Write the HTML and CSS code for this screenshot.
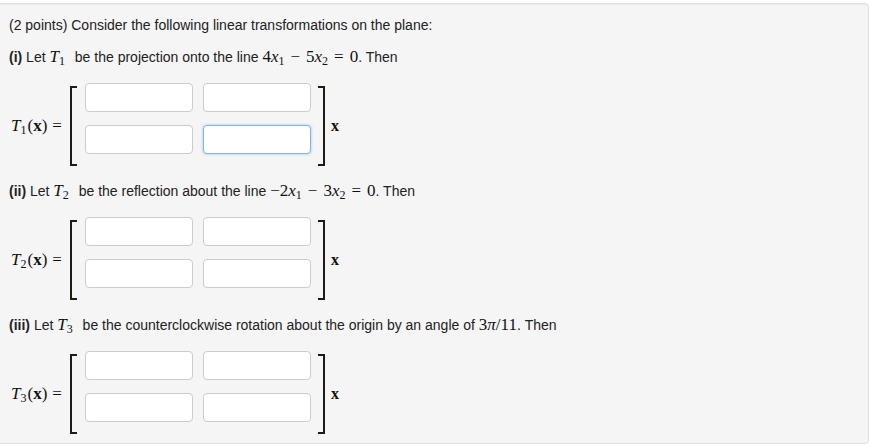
FILE: index.html
```html
<!DOCTYPE html>
<html lang="en">
<head>
<meta charset="utf-8">
<title>Linear transformations</title>
<link rel="stylesheet" href="styles.css">
</head>
<body>
<div class="well">
  <p class="line intro">(2 points) Consider the following linear transformations on the plane:</p>

  <section class="part">
    <p class="line stmt"><b>(i)</b> Let <span class="m t"><i>T</i><sub>1</sub></span> be the projection onto the line <span class="m">4<i>x</i><sub>1</sub><span class="op">−</span>5<i>x</i><sub>2</sub><span class="rel">=</span>0</span>. Then</p>
    <div class="eq">
      <span class="lhs"><i>T</i><sub>1</sub>(<b>x</b>)<span class="eqs">=</span></span>
      <div class="matrix">
        <span class="br l"></span>
        <div class="grid">
          <input class="ans" type="text">
          <input class="ans" type="text">
          <input class="ans" type="text">
          <input class="ans focus" type="text">
        </div>
        <span class="br r"></span>
      </div>
      <b class="x">x</b>
    </div>
  </section>

  <section class="part">
    <p class="line stmt"><b>(ii)</b> Let <span class="m t"><i>T</i><sub>2</sub></span> be the reflection about the line <span class="m">−2<i>x</i><sub>1</sub><span class="op">−</span>3<i>x</i><sub>2</sub><span class="rel">=</span>0</span>. Then</p>
    <div class="eq">
      <span class="lhs"><i>T</i><sub>2</sub>(<b>x</b>)<span class="eqs">=</span></span>
      <div class="matrix">
        <span class="br l"></span>
        <div class="grid">
          <input class="ans" type="text">
          <input class="ans" type="text">
          <input class="ans" type="text">
          <input class="ans" type="text">
        </div>
        <span class="br r"></span>
      </div>
      <b class="x">x</b>
    </div>
  </section>

  <section class="part">
    <p class="line stmt"><b>(iii)</b> Let <span class="m t"><i>T</i><sub>3</sub></span> be the counterclockwise rotation about the origin by an angle of <span class="m">3<i>π</i>/11</span>. Then</p>
    <div class="eq">
      <span class="lhs"><i>T</i><sub>3</sub>(<b>x</b>)<span class="eqs">=</span></span>
      <div class="matrix">
        <span class="br l"></span>
        <div class="grid">
          <input class="ans" type="text">
          <input class="ans" type="text">
          <input class="ans" type="text">
          <input class="ans" type="text">
        </div>
        <span class="br r"></span>
      </div>
      <b class="x">x</b>
    </div>
  </section>
</div>
</body>
</html>
```

FILE: styles.css
```css
html, body {
  margin: 0;
  background: #ffffff;
}

body {
  font-family: "Liberation Sans", Arial, sans-serif;
  font-size: 14px;
  color: #222222;
}

.well {
  margin: 3px 1px 0 -3px;
  padding: 11px 10px 9px 11px;
  background: #f5f5f5;
  border: 1px solid #e0e0e0;
  border-radius: 4px;
  box-shadow: inset 0 1px 1px rgba(0, 0, 0, 0.05);
}

.line {
  margin: 0;
  line-height: 20px;
  white-space: nowrap;
}

.intro {
  margin-bottom: 12px;
}

.part {
  margin-bottom: 15px;
}

.part:last-child {
  margin-bottom: 0;
}

.stmt {
  margin-bottom: 19px;
}

.m {
  font-family: "Liberation Serif", "Times New Roman", serif;
  font-size: 17px;
  color: #111111;
}

.m.t {
  margin-right: 6px;
}

.m sub,
.lhs sub {
  font-size: 12px;
  line-height: 0;
  vertical-align: -3px;
}

.op {
  margin: 0 6px;
}

.rel {
  margin: 0 6px;
}

.eq {
  display: flex;
  align-items: center;
  height: 80px;
}

.lhs {
  box-sizing: border-box;
  width: 61px;
  padding-left: 2px;
  font-family: "Liberation Serif", "Times New Roman", serif;
  font-size: 17px;
  color: #111111;
  white-space: nowrap;
}

.lhs sub {
  margin-right: 1px;
}

.lhs b {
  font-weight: bold;
}

.eqs {
  margin-left: 5px;
}

.matrix {
  display: flex;
  height: 80px;
}

.br {
  box-sizing: border-box;
  width: 7px;
  height: 80px;
  border-top: 2px solid #1e1a14;
  border-bottom: 2px solid #1e1a14;
}

.br.l {
  border-left: 2px solid #1e1a14;
}

.br.r {
  border-right: 2px solid #1e1a14;
}

.grid {
  display: grid;
  grid-template-columns: 108px 108px;
  grid-template-rows: 29px 29px;
  column-gap: 10px;
  row-gap: 13px;
  align-self: flex-start;
  margin: -3px 7px 0 8px;
}

.ans {
  box-sizing: border-box;
  width: 108px;
  height: 29px;
  margin: 0;
  padding: 0 6px;
  background: #ffffff;
  border: 1px solid #cccccc;
  border-radius: 4px;
  font: 13px "Liberation Sans", Arial, sans-serif;
  outline: none;
  -webkit-appearance: none;
  appearance: none;
}

.ans.focus {
  border-color: #82b4ea;
  box-shadow: 0 0 3px rgba(82, 150, 230, 0.55);
}

.x {
  margin-left: 6px;
  font-family: "Liberation Serif", "Times New Roman", serif;
  font-size: 16px;
  font-weight: bold;
  color: #111111;
}
```
